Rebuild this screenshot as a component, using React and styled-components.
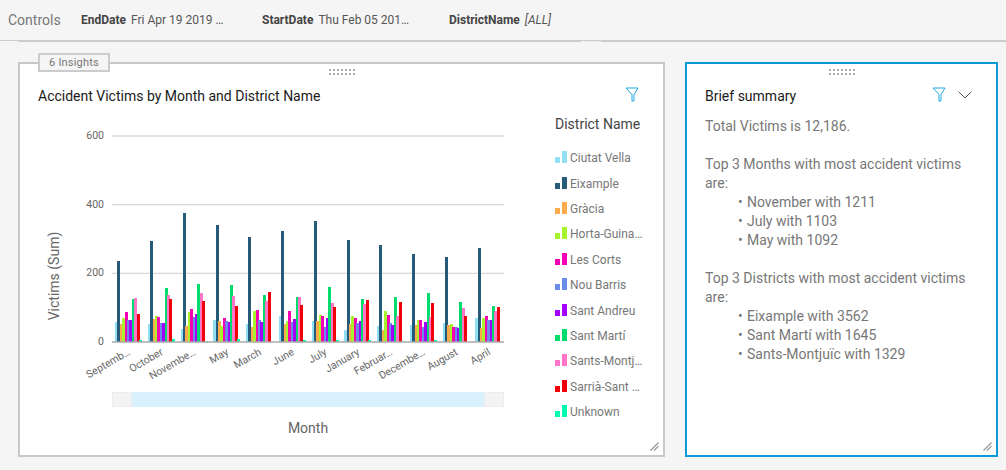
import React from "react";
import styled, { createGlobalStyle } from "styled-components";

const GlobalStyle = createGlobalStyle`
  html, body {
    margin: 0;
    padding: 0;
    background: #f5f5f5;
    font-family: Roboto, "Liberation Sans", sans-serif;
  }
`;

const series = [
  { name: "Ciutat Vella", color: "#90dff3" },
  { name: "Eixample", color: "#255a78" },
  { name: "Gràcia", color: "#ffa94d" },
  { name: "Horta-Guina…", color: "#a6f52c" },
  { name: "Les Corts", color: "#f500b4" },
  { name: "Nou Barris", color: "#6a8ce8" },
  { name: "Sant Andreu", color: "#a300ff" },
  { name: "Sant Martí", color: "#00db6e" },
  { name: "Sants-Montj…", color: "#ff75c8" },
  { name: "Sarrià-Sant …", color: "#f00008" },
  { name: "Unknown", color: "#00fab0" },
];

const months = [
  { label: "Septemb…", values: [58, 235, 51, 69, 86, 63, 63, 124, 127, 83, 5] },
  { label: "October", values: [51, 293, 66, 75, 72, 54, 54, 156, 136, 124, 8] },
  { label: "Novembe…", values: [37, 375, 46, 86, 95, 72, 83, 168, 142, 118, 2] },
  { label: "May", values: [63, 340, 60, 46, 69, 60, 57, 165, 133, 104, 8] },
  { label: "March", values: [51, 305, 43, 89, 92, 63, 57, 136, 118, 145, 0] },
  { label: "June", values: [75, 322, 51, 60, 89, 57, 66, 130, 130, 107, 5] },
  { label: "July", values: [60, 351, 60, 78, 75, 43, 69, 159, 113, 101, 5] },
  { label: "January", values: [34, 296, 51, 75, 69, 54, 60, 124, 110, 121, 5] },
  { label: "Februar…", values: [46, 282, 34, 89, 78, 54, 49, 130, 75, 116, 2] },
  { label: "Decembe…", values: [49, 255, 49, 63, 63, 43, 57, 142, 72, 113, 5] },
  { label: "August", values: [54, 247, 49, 51, 43, 43, 40, 116, 98, 75, 0] },
  { label: "April", values: [69, 273, 40, 69, 75, 63, 63, 104, 89, 101, 0] },
];

const controls = [
  { label: "EndDate", value: "Fri Apr 19 2019 …", width: 181 },
  { label: "StartDate", value: "Thu Feb 05 201…", width: 187 },
  { label: "DistrictName", value: "[ALL]", italic: true },
];

const BASE_Y = 342;
const SCALE = 206 / 600;

const Page = styled.div`
  width: 1006px;
  height: 470px;
  overflow: hidden;
`;

const TopBar = styled.div`
  display: flex;
  align-items: center;
  height: 40px;
  padding-left: 8px;
  border-bottom: 1px solid #ccc;
  box-sizing: content-box;
`;

const BarTitle = styled.span`
  width: 73px;
  font-size: 14px;
  color: #777;
`;

const Control = styled.div`
  display: flex;
  gap: 5px;
  width: ${(p) => (p.$width ? `${p.$width}px` : "auto")};
  font-size: 12px;
`;

const ControlLabel = styled.span`
  font-weight: 700;
  color: #444;
`;

const ControlValue = styled.span`
  color: #555;
  font-style: ${(p) => (p.$italic ? "italic" : "normal")};
`;

const Rule = styled.div`
  height: 1px;
  background: linear-gradient(
    to right,
    transparent 18px,
    #ccc 18px,
    #ccc 581px,
    #eee 581px,
    #eee 601px,
    #ccc 601px
  );
`;

const Board = styled.div`
  display: flex;
  gap: 20px;
  padding: 20px 8px 0 18px;
`;

const Panel = styled.section`
  position: relative;
  box-sizing: border-box;
  width: ${(p) => p.$width}px;
  height: 395px;
  background: #fff;
  border: 2px solid ${(p) => (p.$active ? "#0a9ad6" : "#c8c8c8")};
`;

const InsightsTag = styled.div`
  position: absolute;
  left: 18px;
  top: -11px;
  box-sizing: border-box;
  width: 72px;
  height: 19px;
  border: 2px solid #ccc;
  background: #f5f5f5;
  font-size: 11px;
  line-height: 15px;
  letter-spacing: 0.2px;
  text-align: center;
  color: #777;
`;

const Grip = styled.div`
  position: absolute;
  top: 5px;
  left: 50%;
  width: 30px;
  height: 6px;
  transform: translateX(-50%);
  background: conic-gradient(#aaa 25%, transparent 0) 0 0 / 4px 4px;
`;

const TitleRow = styled.header`
  display: flex;
  align-items: center;
  justify-content: space-between;
  height: 24px;
  padding: 20px 24px 0 18px;
`;

const Title = styled.h2`
  margin: 0;
  font-size: 14px;
  font-weight: 400;
  color: #1a1a1a;
`;

const Actions = styled.div`
  display: flex;
  align-items: center;
  gap: 12px;
  margin-top: -3px;
`;

const ChartBody = styled.div`
  display: flex;
`;

const ChartColumn = styled.div`
  width: 490px;
`;

const ChartSvg = styled.svg`
  display: block;
  font-family: Roboto, "Liberation Sans", sans-serif;
`;

const RangeBar = styled.div`
  display: flex;
  height: 15px;
  margin: 6px 6px 0 92px;
  background: #d9f1fd;
  justify-content: space-between;
`;

const RangeHandle = styled.div`
  box-sizing: border-box;
  width: 20px;
  background: #f3f3f3;
  border: 1px solid #ececec;
`;

const AxisTitle = styled.div`
  margin: 12px 0 0 92px;
  width: 392px;
  font-size: 14px;
  line-height: 18px;
  text-align: center;
  color: #666;
`;

const Legend = styled.div`
  margin-left: 45px;
  padding-top: 7px;
`;

const LegendTitle = styled.div`
  font-size: 14px;
  line-height: 18px;
  color: #444;
  margin-bottom: 12.6px;
`;

const LegendItem = styled.div`
  display: flex;
  align-items: center;
  gap: 3px;
  height: 25.4px;
  font-size: 12px;
  color: #777;
`;

const Swatch = styled.span`
  display: flex;
  align-items: flex-end;
  gap: 2px;
  height: 12px;
  margin-top: -2px;
`;

const SwatchBar = styled.i`
  display: block;
  width: 5px;
  height: ${(p) => p.$h}px;
  background: ${(p) => p.$color};
`;

const Summary = styled.div`
  padding: 9px 18px 0;
  font-size: 14px;
  line-height: 19px;
  color: #777;
`;

const Para = styled.p`
  margin: 0 0 ${(p) => (p.$tight ? 0 : 19)}px;
`;

const BulletList = styled.ul`
  margin: 0 0 19px;
  padding: 0 0 0 33px;
  list-style: none;
`;

const Bullet = styled.li`
  &::before {
    content: "•";
    display: inline-block;
    width: 9px;
  }
`;

const Resize = styled.svg`
  position: absolute;
  right: 4px;
  bottom: 4px;
`;

function FilterIcon() {
  return (
    <svg width="14" height="15" viewBox="0 0 14 15" fill="none" stroke="#1ea7e0" strokeWidth="1">
      <path d="M1 1h12L9 7.5v6.2l-2 .6V7.5z" />
    </svg>
  );
}

function ResizeHandle() {
  return (
    <Resize width="9" height="9" viewBox="0 0 9 9" stroke="#999" strokeWidth="1.2">
      <path d="M0.5 8.5 8.5 0.5M4 8.5 8.5 4" />
    </Resize>
  );
}

function BarChart() {
  return (
    <ChartSvg width="490" height="278" viewBox="20 108 490 278">
      {[200, 400, 600].map((tick) => (
        <line key={tick} x1="112" x2="504" y1={BASE_Y - tick * SCALE} y2={BASE_Y - tick * SCALE} stroke="#d8d8d8" strokeWidth="1.4" />
      ))}
      {[0, 200, 400, 600].map((tick) => (
        <text key={tick} x="104" y={BASE_Y - tick * SCALE + 3} textAnchor="end" fontSize="10.5" fill="#666">
          {tick}
        </text>
      ))}
      <text transform="translate(59 276) rotate(-90)" textAnchor="middle" fontSize="14" fill="#666">
        Victims (Sum)
      </text>
      {months.map((month, i) =>
        month.values.map((value, s) => (
          <rect
            key={`${i}-${s}`}
            x={Math.round(115 + i * 32.75 + s * 2.4)}
            y={BASE_Y - value * SCALE}
            width="3"
            height={value * SCALE}
            fill={series[s].color}
            shapeRendering="crispEdges"
          />
        ))
      )}
      <line x1="112" x2="504" y1="342" y2="342" stroke="#aaa" strokeWidth="1.6" />
      {months.map((month, i) => (
        <text
          key={month.label}
          transform={`translate(${131 + i * 32.75} 354) rotate(-30)`}
          textAnchor="end"
          fontSize="10.5"
          fill="#666"
        >
          {month.label}
        </text>
      ))}
    </ChartSvg>
  );
}

export default function App() {
  return (
    <Page>
      <GlobalStyle />
      <TopBar>
        <BarTitle>Controls</BarTitle>
        {controls.map((c) => (
          <Control key={c.label} $width={c.width}>
            <ControlLabel>{c.label}</ControlLabel>
            <ControlValue $italic={c.italic}>{c.value}</ControlValue>
          </Control>
        ))}
      </TopBar>
      <Rule />
      <Board>
        <Panel $width={647}>
          <InsightsTag>6 Insights</InsightsTag>
          <Grip />
          <TitleRow>
            <Title>Accident Victims by Month and District Name</Title>
            <Actions>
              <FilterIcon />
            </Actions>
          </TitleRow>
          <ChartBody>
            <ChartColumn>
              <BarChart />
              <RangeBar>
                <RangeHandle />
                <RangeHandle />
              </RangeBar>
              <AxisTitle>Month</AxisTitle>
            </ChartColumn>
            <Legend>
              <LegendTitle>District Name</LegendTitle>
              {series.map((s) => (
                <LegendItem key={s.name}>
                  <Swatch>
                    <SwatchBar $h={6} $color={s.color} />
                    <SwatchBar $h={12} $color={s.color} />
                  </Swatch>
                  {s.name}
                </LegendItem>
              ))}
            </Legend>
          </ChartBody>
          <ResizeHandle />
        </Panel>
        <Panel $width={313} $active>
          <Grip />
          <TitleRow>
            <Title>Brief summary</Title>
            <Actions>
              <FilterIcon />
              <svg width="14" height="8" viewBox="0 0 14 8" fill="none" stroke="#555" strokeWidth="1">
                <path d="M0.5 0.5 7 7 13.5 0.5" />
              </svg>
            </Actions>
          </TitleRow>
          <Summary>
            <Para>Total Victims is 12,186.</Para>
            <Para $tight>Top 3 Months with most accident victims are:</Para>
            <BulletList>
              <Bullet>November with 1211</Bullet>
              <Bullet>July with 1103</Bullet>
              <Bullet>May with 1092</Bullet>
            </BulletList>
            <Para $tight>Top 3 Districts with most accident victims are:</Para>
            <BulletList>
              <Bullet>Eixample with 3562</Bullet>
              <Bullet>Sant Martí with 1645</Bullet>
              <Bullet>Sants-Montjuïc with 1329</Bullet>
            </BulletList>
          </Summary>
          <ResizeHandle />
        </Panel>
      </Board>
    </Page>
  );
}
